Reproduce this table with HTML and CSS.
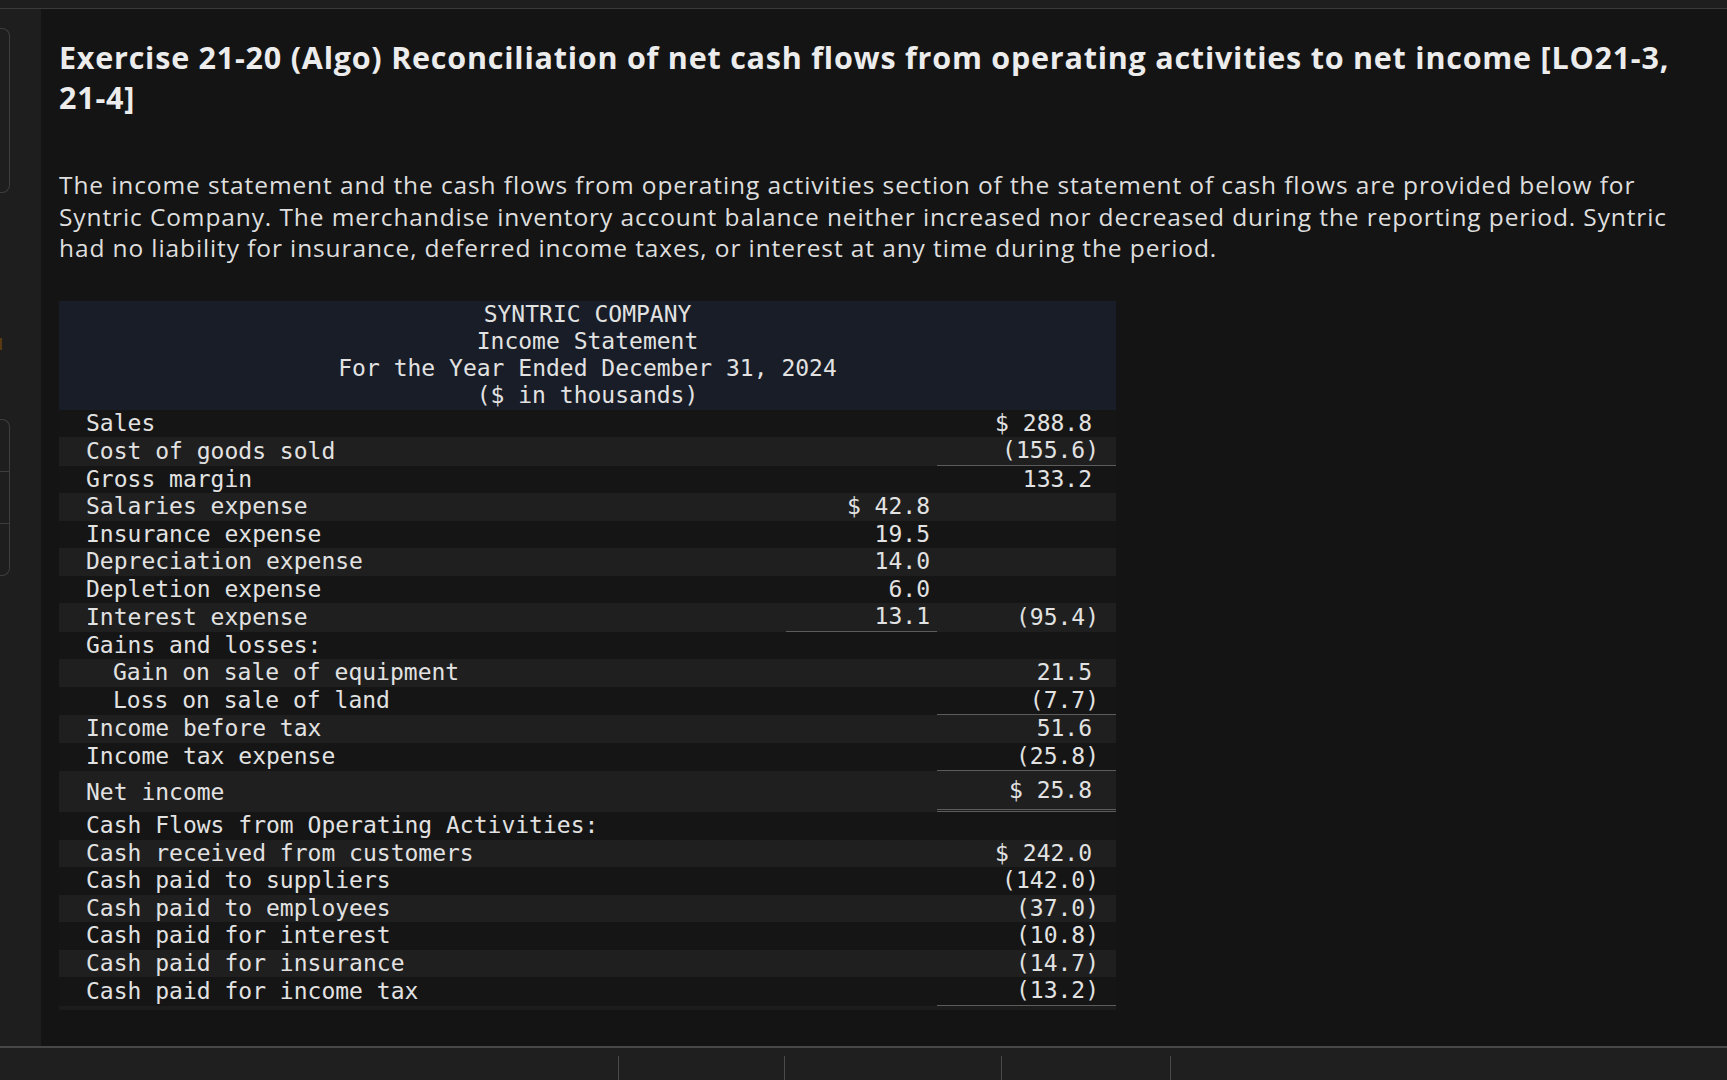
FILE: index.html
```html
<!DOCTYPE html>
<html lang="en">
<head>
<meta charset="utf-8">
<title>Exercise 21-20 (Algo)</title>
<link rel="stylesheet" href="styles.css">
</head>
<body>
<div class="topbar"></div>
<div class="layout">
  <aside class="sidebar">
    <div class="side-box side-box-top"></div>
    <div class="side-mark"></div>
    <div class="side-box side-box-tabs">
      <div class="side-cell"></div>
      <div class="side-cell"></div>
      <div class="side-cell"></div>
    </div>
  </aside>
  <main class="main">
    <h1 class="title">Exercise 21-20 (Algo) Reconciliation of net cash flows from operating activities to net income [LO21-3, 21-4]</h1>
    <p class="intro">The income statement and the cash flows from operating activities section of the statement of cash flows are provided below for Syntric Company. The merchandise inventory account balance neither increased nor decreased during the reporting period. Syntric had no liability for insurance, deferred income taxes, or interest at any time during the period.</p>
    <table class="stmt">
      <colgroup>
        <col class="c-label">
        <col class="c-mid">
        <col class="c-right">
      </colgroup>
      <thead>
        <tr>
          <th colspan="3" class="stmt-head"><div>SYNTRIC COMPANY</div><div>Income Statement</div><div>For the Year Ended December 31, 2024</div><div>($ in thousands)</div></th>
        </tr>
      </thead>
      <tbody>
        <tr class="dark"><td class="lbl">Sales</td><td class="mid"></td><td class="rt pos">$ 288.8</td></tr>
        <tr class="light"><td class="lbl">Cost of goods sold</td><td class="mid"></td><td class="rt ul">(155.6)</td></tr>
        <tr class="dark"><td class="lbl">Gross margin</td><td class="mid"></td><td class="rt pos">133.2</td></tr>
        <tr class="light"><td class="lbl">Salaries expense</td><td class="mid">$ 42.8</td><td class="rt"></td></tr>
        <tr class="dark"><td class="lbl">Insurance expense</td><td class="mid">19.5</td><td class="rt"></td></tr>
        <tr class="light"><td class="lbl">Depreciation expense</td><td class="mid">14.0</td><td class="rt"></td></tr>
        <tr class="dark"><td class="lbl">Depletion expense</td><td class="mid">6.0</td><td class="rt"></td></tr>
        <tr class="light"><td class="lbl">Interest expense</td><td class="mid ul">13.1</td><td class="rt">(95.4)</td></tr>
        <tr class="dark"><td class="lbl">Gains and losses:</td><td class="mid"></td><td class="rt"></td></tr>
        <tr class="light"><td class="lbl indent">Gain on sale of equipment</td><td class="mid"></td><td class="rt pos">21.5</td></tr>
        <tr class="dark"><td class="lbl indent">Loss on sale of land</td><td class="mid"></td><td class="rt ul">(7.7)</td></tr>
        <tr class="light"><td class="lbl">Income before tax</td><td class="mid"></td><td class="rt pos">51.6</td></tr>
        <tr class="dark"><td class="lbl">Income tax expense</td><td class="mid"></td><td class="rt ul">(25.8)</td></tr>
        <tr class="light total"><td class="lbl">Net income</td><td class="mid"></td><td class="rt pos dbl">$ 25.8</td></tr>
        <tr class="dark"><td class="lbl">Cash Flows from Operating Activities:</td><td class="mid"></td><td class="rt"></td></tr>
        <tr class="light"><td class="lbl">Cash received from customers</td><td class="mid"></td><td class="rt pos">$ 242.0</td></tr>
        <tr class="dark"><td class="lbl">Cash paid to suppliers</td><td class="mid"></td><td class="rt">(142.0)</td></tr>
        <tr class="light"><td class="lbl">Cash paid to employees</td><td class="mid"></td><td class="rt">(37.0)</td></tr>
        <tr class="dark"><td class="lbl">Cash paid for interest</td><td class="mid"></td><td class="rt">(10.8)</td></tr>
        <tr class="light"><td class="lbl">Cash paid for insurance</td><td class="mid"></td><td class="rt">(14.7)</td></tr>
        <tr class="dark"><td class="lbl">Cash paid for income tax</td><td class="mid"></td><td class="rt ul">(13.2)</td></tr>
      </tbody>
      <tfoot>
        <tr class="foot"><td colspan="3"></td></tr>
      </tfoot>
    </table>
  </main>
</div>
<footer class="bottombar">
  <div class="bb-item bb-first"></div>
  <div class="bb-item bb-a"></div>
  <div class="bb-item bb-b"></div>
  <div class="bb-item bb-c"></div>
  <div class="bb-item bb-rest"></div>
</footer>
</body>
</html>
```

FILE: styles.css
```css
* { box-sizing: border-box; }

html, body {
  margin: 0;
  padding: 0;
  background: #141414;
  width: 1727px;
  height: 1080px;
  overflow: hidden;
}

body {
  font-family: "Open Sans", Lato, sans-serif;
  color: #e4e4e4;
  display: flex;
  flex-direction: column;
}

.topbar {
  height: 9px;
  flex: 0 0 9px;
  background: #1e1e1e;
  border-bottom: 1px solid #3a3a3a;
}

.layout {
  flex: 0 0 1037px;
  height: 1037px;
  display: flex;
}

.sidebar {
  width: 41px;
  flex: 0 0 41px;
  background: #1e1e1e;
  display: flex;
  flex-direction: column;
}

.side-box {
  width: 10px;
  border: 1px solid #3e3e3e;
  border-left: none;
  border-radius: 0 8px 8px 0;
}

.side-box-top {
  margin-top: 19px;
  height: 165px;
}

.side-mark {
  margin-top: 145px;
  width: 2px;
  height: 12px;
  background: #5a3a12;
}

.side-box-tabs {
  margin-top: 69px;
  height: 157px;
  display: flex;
  flex-direction: column;
}

.side-cell {
  flex: 1;
  border-top: 1px solid #3e3e3e;
}
.side-cell:first-child { border-top: none; }

.main {
  flex: 1;
  background: #141414;
  padding: 28px 18px 0 18px;
}

.title {
  margin: 0;
  font-size: 30.5px;
  line-height: 40px;
  font-weight: 700;
  letter-spacing: 0.77px;
  color: #ececec;
}

.intro {
  margin: 52px 0 0 0;
  font-size: 24.5px;
  line-height: 31.5px;
  letter-spacing: 0.89px;
  color: #dedede;
  padding-right: 8px;
}

.stmt {
  margin-top: 37px;
  width: 1057px;
  table-layout: fixed;
  border-collapse: separate;
  border-spacing: 0;
  font-family: "DejaVu Sans Mono", monospace;
  font-size: 23px;
  color: #e2e2e2;
}

.c-label { width: 727px; }
.c-mid { width: 151px; }
.c-right { width: 179px; }

.stmt-head {
  background: #191d27;
  font-weight: 400;
  text-align: center;
  line-height: 27.25px;
  padding: 0;
  white-space: pre;
}

.stmt td {
  padding: 0;
  line-height: 27.5px;
  height: 27.5px;
  white-space: pre;
}

.dark td { background: #151515; }
.light td { background: #1f1f1f; }

.stmt td.lbl { padding-left: 27px; }
.stmt td.lbl.indent { padding-left: 54px; }

.stmt td.mid {
  text-align: right;
  padding-right: 7px;
}

.stmt td.rt {
  text-align: right;
  padding-right: 17px;
}

.stmt td.rt.pos { padding-right: 24px; }

.ul { border-bottom: 1px solid #5c5c5c; }

.stmt .total td {
  height: 38px;
  line-height: 38px;
}

.dbl { border-bottom: 3px double #5c5c5c; }

.stmt .foot td {
  height: 4px;
  line-height: 0;
  background: #1c1c1c;
}

.bottombar {
  flex: 0 0 34px;
  height: 34px;
  background: #1f1f1f;
  border-top: 2px solid #474747;
  display: flex;
  align-items: flex-end;
}

.bb-item { height: 24px; }
.bb-first { width: 618px; }
.bb-a, .bb-b, .bb-c, .bb-rest { border-left: 1px solid #4a4a4a; }
.bb-a { width: 166px; }
.bb-b { width: 217px; }
.bb-c { width: 169px; }
.bb-rest { flex: 1; }
```
